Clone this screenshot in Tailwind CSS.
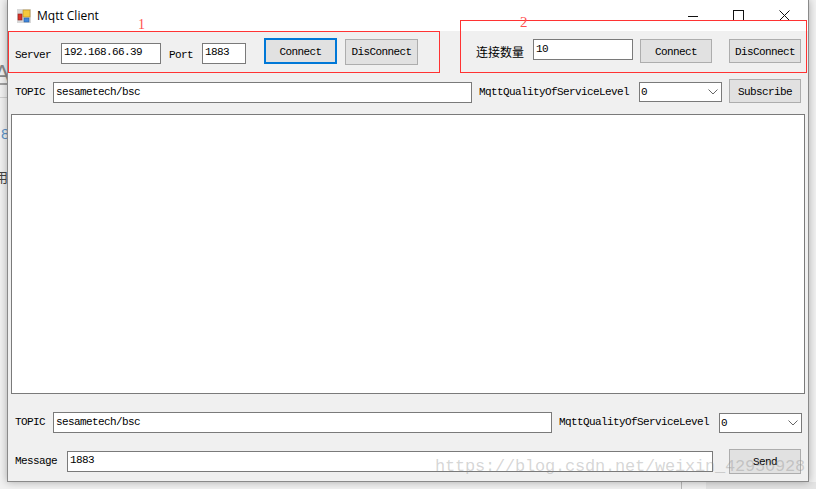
<!DOCTYPE html>
<html><head><meta charset="utf-8"><script src="https://cdn.jsdelivr.net/npm/@tailwindcss/browser@4"></script></head>
<body class="m-0">
<div class="relative w-[816px] h-[489px] overflow-hidden bg-[#f1f1f1] font-['Liberation_Mono','DejaVu_Sans_Mono',monospace] text-[11px] tracking-[-0.6px] leading-[12px] text-black">
  <!-- page behind the window -->
  <div class="absolute left-[-6px] top-[62px] text-[24px] leading-[24px] text-[#8a8a8a] font-['Liberation_Sans',sans-serif]">A</div>
  <div class="absolute left-0 top-[83px] w-[7px] h-[2px] bg-[#a0a0a0]"></div>
  <div class="absolute left-0 top-[97px] w-[7px] h-px bg-[#d0d0d0]"></div>
  <div class="absolute left-px top-[126px] text-[15px] tracking-normal leading-[16px] text-[#5b93c7] font-['Liberation_Sans',sans-serif]">8</div>
  <div class="absolute left-[-5px] top-[169px] text-[13px] tracking-normal leading-[16px] text-[#444] font-['Noto_Sans_CJK_SC',sans-serif]">用</div>
  <div class="absolute left-[706px] top-[482px] w-[110px] h-[7px] bg-[#e4e4e4]"></div>
  <div class="absolute left-[681px] top-[482px] w-px h-[7px] bg-[#b8b8b8]"></div>

  <!-- window -->
  <div class="absolute left-[7px] top-0 w-[802px] h-[482px] border-x border-b border-[#8a8a8a] bg-[#f0f0f0] shadow-[0_0_8px_rgba(0,0,0,0.3)]">
    <div class="flex items-center h-[31px] bg-white">
      <svg class="ml-[9px]" width="14" height="14" viewBox="0 0 14 14">
        <rect x="0" y="0" width="14" height="14" fill="#d8d8d8"/>
        <rect x="6" y="1" width="7" height="7" fill="#f5c83c" stroke="#b98a1e" stroke-width="0.6"/>
        <rect x="1" y="5" width="4" height="6" fill="#d8322a" stroke="#8e1f1a" stroke-width="0.6"/>
        <rect x="7" y="9" width="5" height="4" fill="#3f86dc" stroke="#2a5e9e" stroke-width="0.6"/>
      </svg>
      <span class="ml-[6px] font-['Open_Sans',sans-serif] text-[12px] tracking-normal leading-[16px] text-black">Mqtt Client</span>
      <div class="ml-auto flex items-center h-full">
        <svg class="mr-[35px]" width="10" height="10" viewBox="0 0 10 10"><path d="M0 5.5H10" stroke="#111" stroke-width="1"/></svg>
        <svg class="mr-[35px]" width="11" height="11" viewBox="0 0 11 11"><rect x="0.5" y="0.5" width="10" height="10" fill="none" stroke="#111"/></svg>
        <svg class="mr-[18px]" width="11" height="11" viewBox="0 0 11 11"><path d="M0.5 0.5L10.5 10.5M10.5 0.5L0.5 10.5" stroke="#111"/></svg>
      </div>
    </div>

    <div class="flex items-start h-[41px] pl-[7px]">
      <span class="w-[46px] mt-[18px]">Server</span>
      <div class="w-[100px] h-[21px] mt-[12px] border border-[#7a7a7a] bg-white pl-[2px] leading-[17px]">192.168.66.39</div>
      <span class="ml-[8px] w-[33px] mt-[18px]">Port</span>
      <div class="w-[44px] h-[21px] mt-[12px] border border-[#7a7a7a] bg-white pl-[2px] leading-[17px]">1883</div>
      <button class="ml-[18px] w-[73px] h-[26px] mt-[7px] pt-[1px] border-2 border-[#0078d7] bg-[#e1e1e1] leading-[12px]">Connect</button>
      <button class="ml-[8px] w-[73px] h-[26px] mt-[8px] border border-[#adadad] bg-[#e1e1e1] leading-[12px]">DisConnect</button>
      <span class="ml-[58px] w-[57px] mt-[13px] font-['Noto_Sans_CJK_SC',sans-serif] text-[12px] tracking-normal leading-[16px]">连接数量</span>
      <div class="w-[100px] h-[21px] mt-[8px] border border-[#7a7a7a] bg-white pl-[2px] leading-[18px]">10</div>
      <button class="ml-[7px] w-[72px] h-[24px] mt-[8px] pt-[1px] border border-[#adadad] bg-[#e1e1e1] leading-[12px]">Connect</button>
      <button class="ml-[17px] w-[72px] h-[24px] mt-[8px] pt-[1px] border border-[#adadad] bg-[#e1e1e1] leading-[12px]">DisConnect</button>
    </div>

    <div class="flex items-start h-[42px] pl-[7px]">
      <span class="w-[38px] mt-[14px]">TOPIC</span>
      <div class="w-[419px] h-[21px] mt-[10px] border border-[#7a7a7a] bg-white pl-[2px] leading-[19px]">sesametech/bsc</div>
      <span class="ml-[7px] w-[160px] mt-[14px]">MqttQualityOfServiceLevel</span>
      <div class="flex items-center justify-between w-[83px] h-[20px] mt-[10px] border border-[#7a7a7a] bg-white pl-[1px] pr-[3px]">
        <span>0</span>
        <svg width="10" height="6" viewBox="0 0 10 6"><path d="M0.5 0.5L5 5L9.5 0.5" fill="none" stroke="#666"/></svg>
      </div>
      <button class="ml-[7px] w-[72px] h-[24px] mt-[7px] pt-[1px] border border-[#adadad] bg-[#e1e1e1] leading-[12px]">Subscribe</button>
    </div>

    <div class="ml-[3px] w-[794px] h-[280px] border border-[#7a7a7a] bg-white"></div>

    <div class="flex items-start h-[49px] pl-[7px]">
      <span class="w-[38px] mt-[22px]">TOPIC</span>
      <div class="w-[499px] h-[21px] mt-[18px] border border-[#7a7a7a] bg-white pl-[2px] leading-[19px]">sesametech/bsc</div>
      <span class="ml-[7px] w-[160px] mt-[22px]">MqttQualityOfServiceLevel</span>
      <div class="flex items-center justify-between w-[83px] h-[20px] mt-[19px] border border-[#7a7a7a] bg-white pl-[1px] pr-[3px]">
        <span>0</span>
        <svg width="10" height="6" viewBox="0 0 10 6"><path d="M0.5 0.5L5 5L9.5 0.5" fill="none" stroke="#666"/></svg>
      </div>
    </div>

    <div class="flex items-start h-[38px] pl-[7px]">
      <span class="w-[52px] mt-[12px]">Message</span>
      <div class="w-[646px] h-[21px] mt-[8px] border border-[#7a7a7a] bg-white pl-[2px] leading-[17px]">1883</div>
      <button class="ml-[16px] w-[72px] h-[25px] mt-[6px] border border-[#adadad] bg-[#e1e1e1] leading-[12px]">Send</button>
    </div>
  </div>

  <!-- annotations -->
  <div class="absolute left-[8px] top-[31px] w-[432px] h-[42px] border border-[#ff3333]"></div>
  <div class="absolute left-[460px] top-[20px] w-[347px] h-[53px] border border-[#ff3333]"></div>
  <div class="absolute left-[138px] top-[18px] font-['Liberation_Serif',serif] text-[14px] tracking-normal leading-[14px] text-[#ff5050]">1</div>
  <div class="absolute left-[520px] top-[15px] font-['Liberation_Serif',serif] text-[15px] tracking-normal leading-[15px] text-[#ff5050]">2</div>
  <!-- watermark -->
  <div class="absolute left-[435px] top-[457px] text-[17px] tracking-[-0.2px] leading-[20px] text-[#888]/35 whitespace-nowrap">https://blog.csdn.net/weixin_42950928</div>
</div>
</body></html>
